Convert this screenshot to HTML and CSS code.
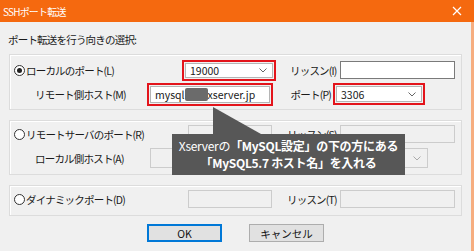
FILE: index.html
```html
<!DOCTYPE html>
<html lang="ja">
<head>
  <meta charset="UTF-8">
  <title>SSHポート転送</title>
  <link rel="stylesheet" href="styles.css">
</head>
<body>
  <div class="window">
    <div class="titlebar">
      <span class="title">SSHポート転送</span>
      <svg class="close" width="10" height="10" viewBox="0 0 10 10"><path d="M1 1L9 9M9 1L1 9" stroke="#fff" stroke-width="1.2"/></svg>
    </div>

    <div class="intro">ポート転送を行う向きの選択:</div>

    <div class="group">
      <div class="row">
        <label class="lead lead-a"><span class="radio on"></span>ローカルのポート(L)</label>
        <div class="hl hl-a"><div class="combo">19000<svg class="chev" width="8" height="5" viewBox="0 0 8 5"><path d="M0.5 0.5L4 4L7.5 0.5" fill="none" stroke="#666"/></svg></div></div>
        <span class="side">リッスン(I)</span>
        <div class="field listen"></div>
      </div>
      <div class="row">
        <label class="lead lead-b sub">リモート側ホスト(M)</label>
        <div class="hl hl-host"><div class="combo">mysql<span class="blur"></span>xserver.jp</div></div>
        <span class="side side-port">ポート(P)</span>
        <div class="hl hl-port"><div class="combo">3306<svg class="chev" width="8" height="5" viewBox="0 0 8 5"><path d="M0.5 0.5L4 4L7.5 0.5" fill="none" stroke="#666"/></svg></div></div>
      </div>
    </div>

    <div class="group g2">
      <div class="row">
        <label class="lead lead-c"><span class="radio"></span>リモートサーバのポート(R)</label>
        <div class="field off short"></div>
        <span class="side">リッスン(S)</span>
        <div class="field off listen"></div>
      </div>
      <div class="row">
        <label class="lead lead-d sub">ローカル側ホスト(A)</label>
        <div class="field off wide"><svg class="chev" width="8" height="5" viewBox="0 0 8 5"><path d="M0.5 0.5L4 4L7.5 0.5" fill="none" stroke="#aaa"/></svg></div>
      </div>
    </div>

    <div class="group g3">
      <div class="row">
        <label class="lead lead-c"><span class="radio"></span>ダイナミックポート(D)</label>
        <div class="field off short"></div>
        <span class="side">リッスン(T)</span>
        <div class="field off listen"></div>
      </div>
    </div>

    <div class="buttons">
      <button class="btn default">OK</button>
      <button class="btn">キャンセル</button>
    </div>

    <div class="callout">
      <span class="thin">Xserverの</span>「MySQL設定」の下の方にある<br>
      「MySQL5.7 ホスト名」を入れる
    </div>
  </div>
</body>
</html>
```

FILE: styles.css
```css
* {
  box-sizing: border-box;
}

body {
  margin: 0;
  background-color: #f0f0f0;
  font-family: "Noto Sans CJK JP", "Noto Sans", sans-serif;
  font-size: 10.5px;
  letter-spacing: -0.8px;
  color: #1a1a1a;
}

.window {
  position: relative;
  width: 474px;
  height: 251px;
  background-color: #f0f0f0;
  border-right: 3px solid #f6ad7f;
}

.titlebar {
  display: flex;
  align-items: center;
  justify-content: space-between;
  height: 22px;
  margin-right: -3px;
  padding: 0 12px 0 3px;
  background-color: #f5690f;
  color: #fff;
}

.title {
  font-size: 10px;
}

.intro {
  height: 32px;
  padding: 11px 0 0 8px;
  line-height: 14px;
}

.group {
  width: 453px;
  margin-left: 9px;
  padding: 3px 0 3px 4px;
  border: 1px solid #dcdcdc;
  box-shadow: inset 1px 1px 0 #fff;
}

.g2 {
  margin-top: 10px;
  padding-top: 1px;
  padding-bottom: 4px;
}

.g3 {
  margin-top: 10px;
  padding-top: 1px;
  padding-bottom: 4px;
}

.row {
  display: flex;
  align-items: center;
  height: 24px;
}

.lead {
  display: flex;
  align-items: center;
  flex: none;
  white-space: nowrap;
}

.lead-a { width: 168px; }
.lead-b { width: 133px; }
.lead-c { width: 174px; }
.lead-d { width: 136px; }

.sub {
  padding-left: 21px;
}

.radio {
  position: relative;
  width: 11px;
  height: 11px;
  margin-right: 1px;
  border: 1px solid #333;
  border-radius: 50%;
  background-color: #fff;
  flex: none;
}

.radio.on::after {
  content: '';
  position: absolute;
  left: 2px;
  top: 2px;
  width: 5px;
  height: 5px;
  border-radius: 50%;
  background-color: #222;
}

.hl {
  flex: none;
  padding: 1px;
  border: 2px solid #e3141b;
}

.hl-a { width: 94px; height: 21px; }
.hl-host { width: 126px; height: 23px; }
.hl-port { width: 92px; height: 22px; }

.combo {
  display: flex;
  align-items: center;
  height: 100%;
  padding: 0 5px 0 4px;
  background-color: #fff;
  border: 1px solid #b5b5b5;
  white-space: nowrap;
  letter-spacing: 0;
}

.hl-a .combo {
  padding-left: 4px;
}

.combo .chev {
  margin-left: auto;
}

.blur {
  display: inline-block;
  width: 23px;
  height: 13px;
  background-color: #6b6b6b;
  border-radius: 2px;
  filter: blur(0.6px);
}

.side {
  flex: none;
  width: 50px;
  margin-left: 14px;
  white-space: nowrap;
}

.side-port {
  width: 60px;
  margin-left: 0;
  padding-right: 2px;
  text-align: right;
}

.field {
  flex: none;
  height: 18px;
  background-color: #fff;
  border: 1px solid #7a7a7a;
}

.field.off {
  background-color: #f0f0f0;
  border-color: #cccccc;
}

.listen { width: 115px; }
.short { width: 84px; }

.g2 .side,
.g3 .side {
  margin-left: 15px;
  width: 53px;
}

.wide {
  display: flex;
  align-items: center;
  justify-content: flex-end;
  width: 278px;
  height: 20px;
  padding-right: 6px;
}

.buttons {
  display: flex;
  justify-content: center;
  gap: 27px;
  margin-top: 8px;
}

.btn {
  width: 75px;
  height: 18px;
  padding: 0;
  background-color: #e1e1e1;
  border: 1px solid #adadad;
  font: inherit;
  color: #111;
}

.btn.default {
  border: 2px solid #0078d7;
}

.callout {
  position: absolute;
  left: 172px;
  top: 134px;
  width: 233px;
  height: 41px;
  padding-top: 3px;
  background-color: #575757;
  color: #fff;
  font-size: 12px;
  font-weight: bold;
  line-height: 17px;
  letter-spacing: -0.3px;
  text-align: center;
}

.callout::before {
  content: '';
  position: absolute;
  left: 41px;
  top: -27px;
  border-bottom: 27px solid #575757;
  border-right: 48px solid transparent;
}

.thin {
  font-weight: normal;
}
```
